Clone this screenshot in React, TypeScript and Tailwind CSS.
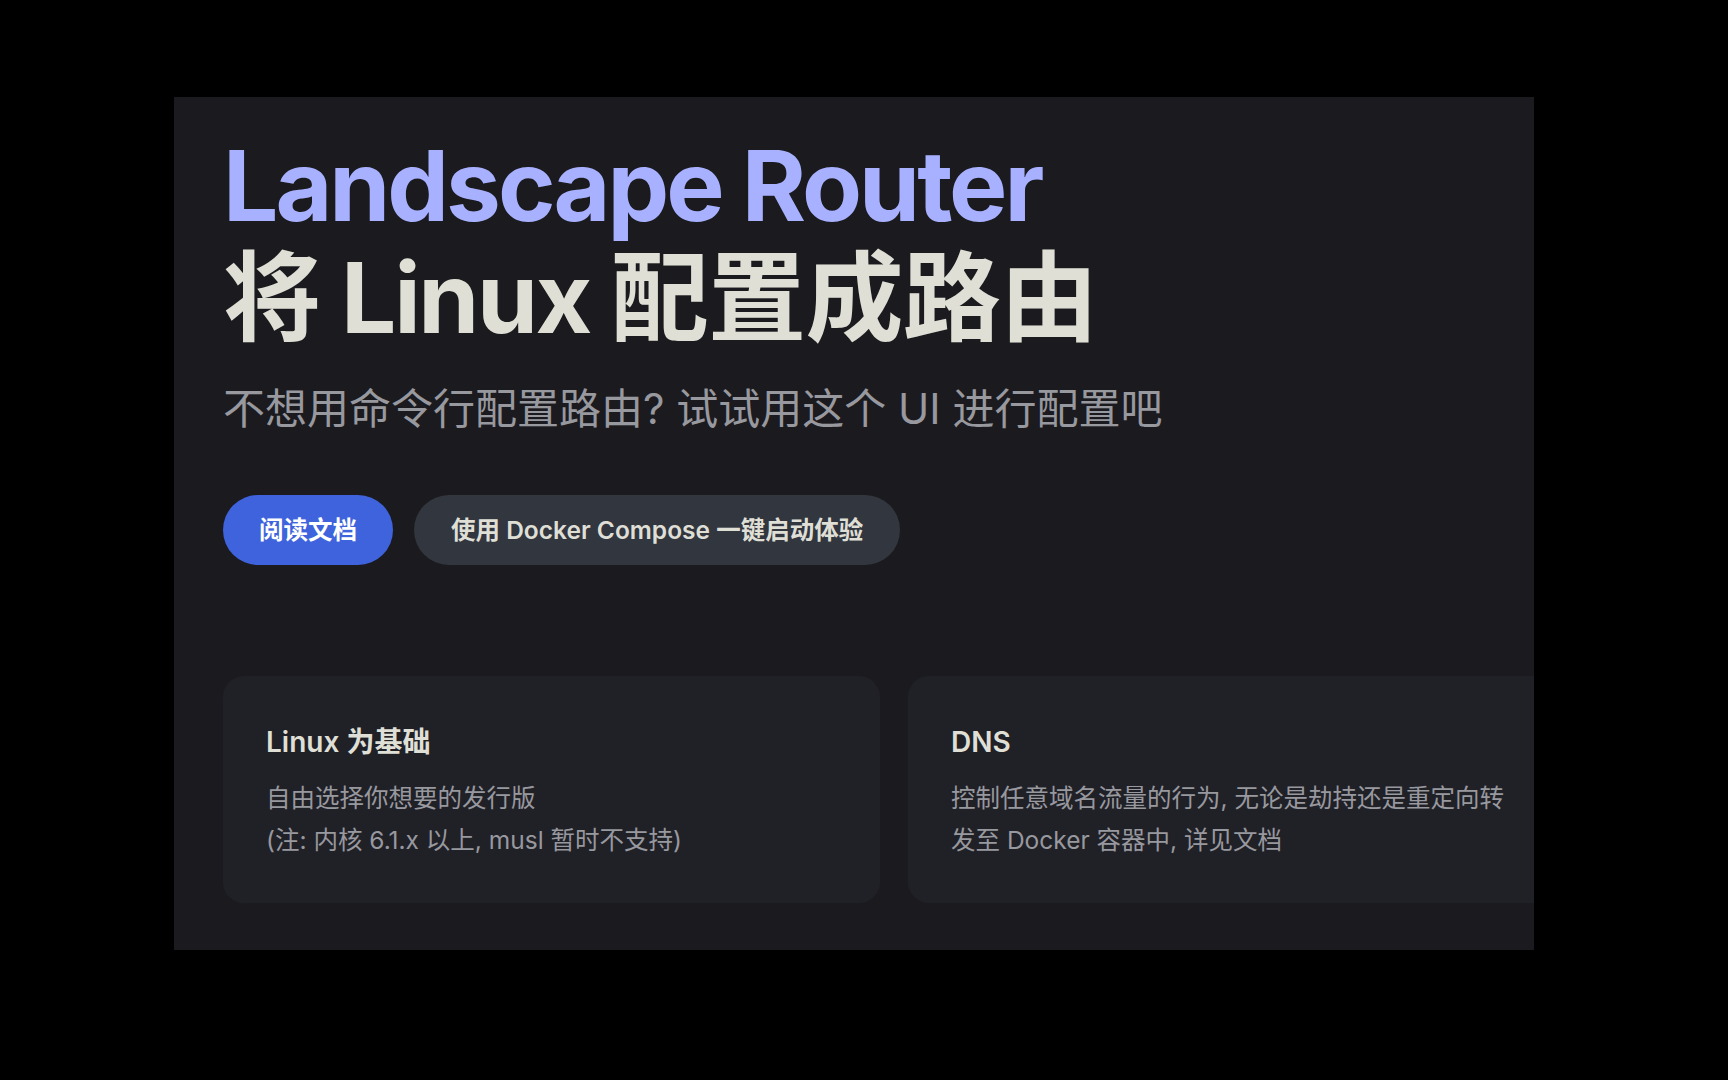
const FONT = { fontFamily: 'Inter, "Noto Sans CJK SC", sans-serif' }

const FEATURES = [
  {
    title: 'Linux 为基础',
    lines: ['自由选择你想要的发行版', '(注: 内核 6.1.x 以上, musl 暂时不支持)'],
  },
  {
    title: 'DNS',
    lines: ['控制任意域名流量的行为, 无论是劫持还是重定向转发至 Docker 容器中, 详见文档'],
  },
]

export default function App() {
  return (
    <div className="min-h-screen bg-black pt-[97px] pl-[174px]" style={FONT}>
      <div className="w-[1360px] h-[853px] overflow-hidden bg-[#1b1b1f] pl-[49px] pt-[33px]">
        {/* Hero */}
        <h1 className="text-[98px] leading-[112px] font-bold whitespace-nowrap">
          <span className="block text-[#a8b1ff] tracking-[-3px]">Landscape Router</span>
          <span className="block text-[#dfdfd6] tracking-[-0.7px]">
            将<span className="tracking-[-2.4px]"> Linux </span>配置成路由
          </span>
        </h1>
        <p className="pt-[23px] text-[42px] leading-[63px] text-[#98989f] whitespace-nowrap">
          不想用命令行配置路由? 试试用这个 UI 进行配置吧
        </p>

        <div className="mt-[55px] flex gap-[21px]">
          <button className="h-[70px] px-[36px] rounded-full bg-[#3e63dd] text-white text-[24.5px] font-semibold">
            阅读文档
          </button>
          <button className="h-[70px] px-[37px] rounded-full bg-[#32363f] text-[#dfdfd6] text-[24.5px] font-semibold">
            使用 Docker Compose 一键启动体验
          </button>
        </div>

        {/* Features */}
        <div className="mt-[111px] flex gap-[28px]">
          {FEATURES.map((f) => (
            <div key={f.title} className="w-[657px] h-[227px] shrink-0 rounded-[21px] bg-[#202127] px-[43px] pt-[45px]">
              <h2 className="text-[28px] leading-[42px] font-semibold text-[#dfdfd6]">{f.title}</h2>
              <p className="pt-[14px] text-[24.5px] leading-[42px] text-[#98989f]">
                {f.lines.map((l, i) => (
                  <span key={i} className="block">{l}</span>
                ))}
              </p>
            </div>
          ))}
        </div>
      </div>
    </div>
  )
}
